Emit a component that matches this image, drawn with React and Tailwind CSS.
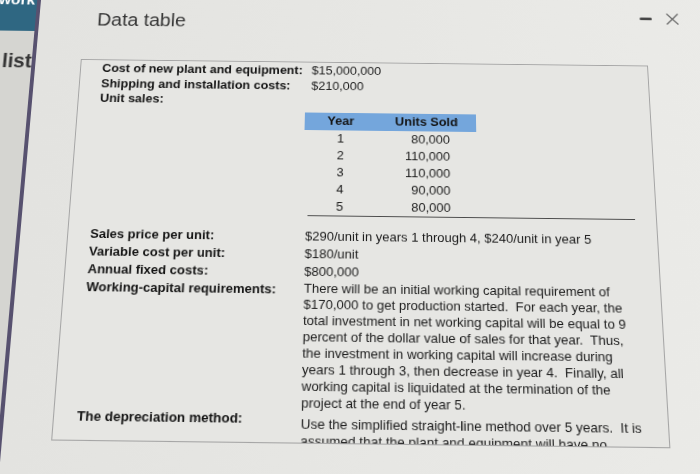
// Photo of a "Data table" dialog, drawn flat and then tilted with a perspective
// transform so the slant of the photographed screen comes back.

const topRows = [
  ['Cost of new plant and equipment:', '$15,000,000'],
  ['Shipping and installation costs:', '$210,000'],
]

const unitSales = [
  ['1', '80,000'],
  ['2', '110,000'],
  ['3', '110,000'],
  ['4', '90,000'],
  ['5', '80,000'],
]

const workingCapital = [
  'There will be an initial working capital requirement of',
  '$170,000 to get production started.\u00a0 For each year, the',
  'total investment in net working capital will be equal to 9',
  'percent of the dollar value of sales for that year.\u00a0 Thus,',
  'the investment in working capital will increase during',
  'years 1 through 3, then decrease in year 4.\u00a0 Finally, all',
  'working capital is liquidated at the termination of the',
  'project at the end of year 5.',
]

const depreciation = [
  'Use the simplified straight-line method over 5 years.\u00a0 It is',
  'assumed that the plant and equipment will have no',
]

function Lines({ lines }) {
  return (
    <div className="whitespace-nowrap leading-[16px]">
      {lines.map((l) => (
        <div key={l}>{l}</div>
      ))}
    </div>
  )
}

export default function App() {
  return (
    <div className="h-[474px] w-[700px] overflow-hidden bg-[#e4e4e1] [font-family:'Liberation_Sans',Arial,sans-serif]">
      <div className="-ml-[50px] -mt-[43px] flex h-[560px] w-[800px] [transform:perspective(1000px)_rotateX(13deg)_rotate(0.7deg)]">
        {/* app side strip behind the dialog */}
        <div className="flex w-[66px] shrink-0 flex-col overflow-hidden bg-[#d5d5d1]">
          <div className="flex h-[62px] justify-end whitespace-nowrap bg-[#2f6782] pt-[17px] pr-[2px] text-[16.5px] font-bold leading-[18px] text-white">
            <span>Homework</span>
          </div>
          <div className="mt-[22px] flex justify-end text-[21.5px] font-bold leading-[24px] text-[#363636]">
            <span>list</span>
          </div>
        </div>
        <div className="w-[4px] shrink-0 bg-[#57516f]" />

        {/* dialog */}
        <div className="flex-1 bg-gradient-to-r from-[#e3e3e0] to-[#ebebe8] pl-[47px] pt-[36px]">
          <div className="flex w-[627px] items-start justify-between">
            <h2 className="pl-[14px] text-[20.5px] leading-[24px] text-[#363636]">Data table</h2>
            <div className="-mt-[3px] flex items-center gap-[14px]">
              <div className="h-[3px] w-[13px] rounded-sm bg-[#474747]" />
              <svg width="15" height="15" viewBox="0 0 15 15">
                <path d="M1.5 1.5 L13.5 13.5 M13.5 1.5 L1.5 13.5" stroke="#666" strokeWidth="1.4" fill="none" />
              </svg>
            </div>
          </div>

          <div className="mt-[33px] h-[390px] w-[591px] overflow-hidden border border-[#a5a5a5] bg-[#e6e6e3] pl-[22px] pt-[1px] text-[13px] text-[#1c1c1c]">
            {/* fixed costs */}
            <div className="leading-[16.5px]">
              {topRows.map(([k, v]) => (
                <div key={k} className="flex">
                  <span className="w-[218px] font-bold text-[#141414]">{k}</span>
                  <span>{v}</span>
                </div>
              ))}
              <div className="font-bold text-[#141414]">Unit sales:</div>
            </div>

            {/* unit sales table */}
            <div className="ml-[212px] mt-[4px] w-[176px]">
              <div className="flex h-[19px] items-center bg-[#74a6dc] font-bold text-[#141414]">
                <span className="w-[74px] text-center">Year</span>
                <span className="flex-1 text-center">Units Sold</span>
              </div>
              {unitSales.map(([y, u]) => (
                <div key={y} className="flex leading-[18px]">
                  <span className="w-[74px] text-center">{y}</span>
                  <span className="flex-1 pr-[27px] text-right">{u}</span>
                </div>
              ))}
            </div>
            <div className="ml-[217px] h-px w-[329px] bg-[#4b4b4b]" />

            {/* assumptions */}
            <div className="mt-[12px] grid grid-cols-[215px_1fr] gap-y-[1px] leading-[17px]">
              <span className="font-bold text-[#141414]">Sales price per unit:</span>
              <span>$290/unit in years 1 through 4, $240/unit in year 5</span>
              <span className="font-bold text-[#141414]">Variable cost per unit:</span>
              <span>$180/unit</span>
              <span className="font-bold text-[#141414]">Annual fixed costs:</span>
              <span>$800,000</span>
              <span className="font-bold text-[#141414]">Working-capital requirements:</span>
              <Lines lines={workingCapital} />
              <span className="-mt-[3px] font-bold text-[#141414]">The depreciation method:</span>
              <div className="mt-[3px]">
                <Lines lines={depreciation} />
              </div>
            </div>
          </div>
        </div>
      </div>
    </div>
  )
}
